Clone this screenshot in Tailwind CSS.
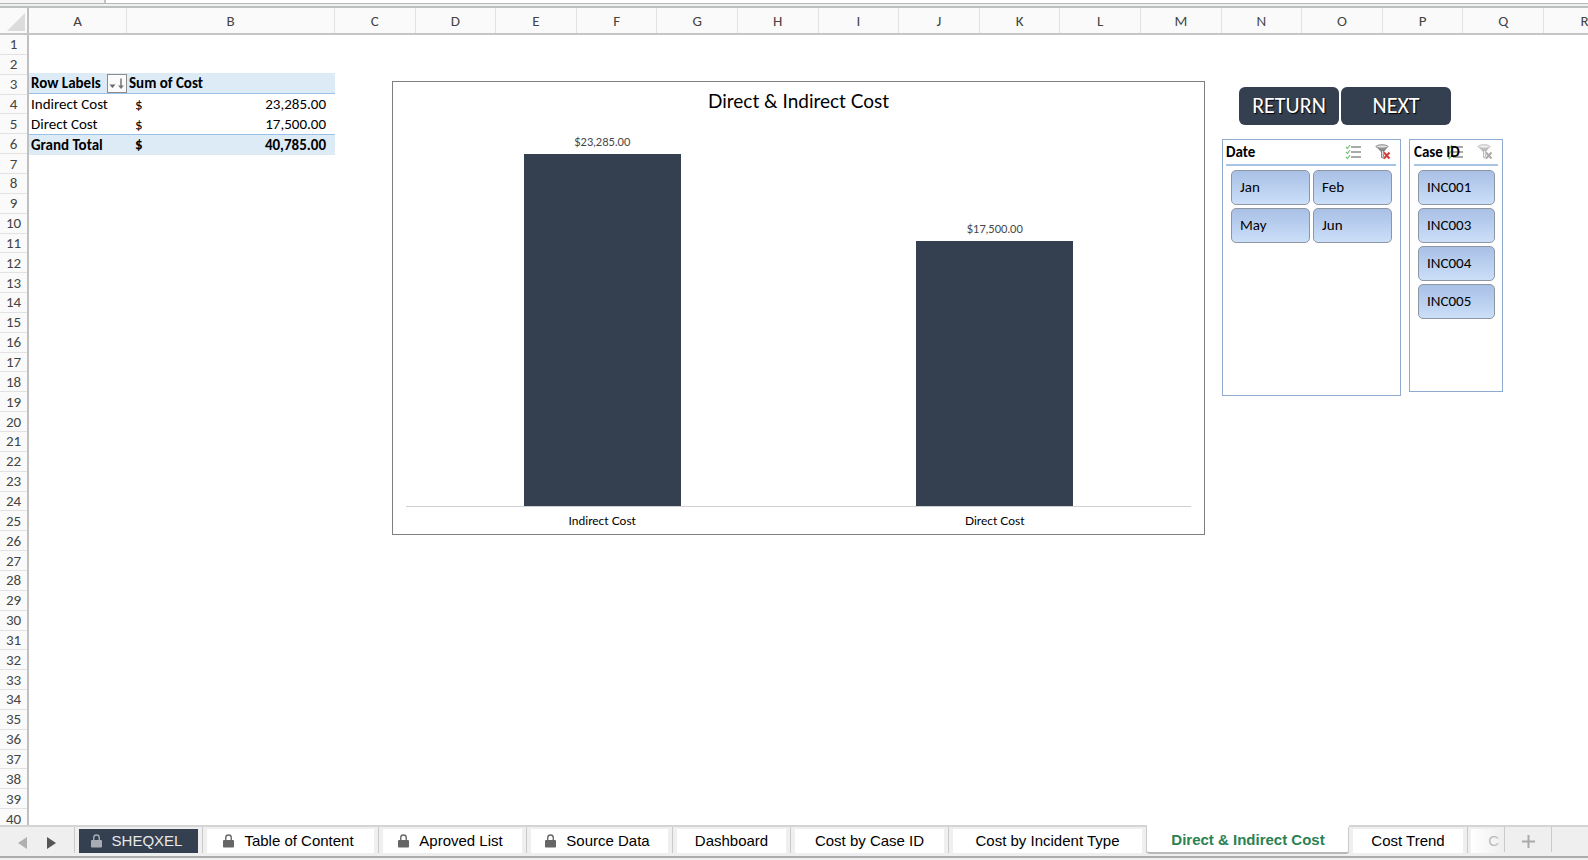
<!DOCTYPE html>
<html lang="en">
<head>
<meta charset="utf-8">
<title>Direct &amp; Indirect Cost</title>
<script src="https://cdn.jsdelivr.net/npm/@tailwindcss/browser@4"></script>
</head>
<body class="h-screen overflow-hidden flex flex-col bg-white text-black text-[15px] font-[Carlito,Lato,sans-serif]">

<!-- lower edge of the formula bar -->
<div class="h-2 shrink-0 flex flex-col">
  <div class="h-[3px] flex bg-white"><div class="w-[106px] border-r-2 border-[#c4c4c4] bg-[#f6f6f6]"></div></div>
  <div class="h-[5px] border-t border-b-2 border-t-[#b4b8b6] border-b-[#bcc0be] bg-[#f0f0f0]"></div>
</div>

<!-- column headings -->
<div id="columns" class="h-[27px] shrink-0 flex overflow-hidden border-b-2 border-[#c6c6c6] bg-[#fafafa] text-[#444] leading-[27px] text-center">
  <div class="w-[29px] shrink-0 border-r-2 border-[#c0c0c0]">
    <svg class="w-[27px] h-[25px]" viewBox="0 0 27 25" aria-hidden="true"><path d="M25 5v18H7z" fill="#dcdcdc"/></svg>
  </div>
  <div class="w-[98px] shrink-0 border-r border-[#e2e2e2]">A</div>
  <div class="w-[208px] shrink-0 border-r border-[#e2e2e2]">B</div>
  <div id="narrow" class="w-[1209px] shrink-0 grid grid-cols-[repeat(15,1fr)]"></div>
  <div class="w-[81px] shrink-0">R</div>
</div>

<main class="flex-1 min-h-0 flex overflow-hidden">
  <!-- row numbers; the last row runs on under the tab bar -->
  <div id="rows" class="w-[29px] h-[calc(100%+4px)] shrink-0 grid grid-rows-[repeat(40,1fr)] border-r-2 border-[#c0c0c0] bg-[#fafafa] text-[#444] text-center"></div>

  <div class="flex items-start">
    <table class="mt-[38px] w-[306px] shrink-0 table-fixed border-collapse leading-[19px]">
      <colgroup><col class="w-[98px]"><col></colgroup>
      <thead>
        <tr class="h-5 bg-[#ddebf7] border-b border-[#9bc2e6] text-left font-bold">
          <th scope="col" class="p-0 pl-[2px]">
            <span class="flex items-center justify-between whitespace-nowrap"><span class="pt-px">Row Labels</span>
              <button type="button" aria-label="Sort and filter row labels" class="w-5 h-[19px] shrink-0 border border-[#8c8c8c] bg-[#fbfbfb]">
                <svg class="w-[18px] h-[17px]" viewBox="0 0 18 17" aria-hidden="true"><path d="M1.500 9.500h6L4.500 13z" fill="#666"/><path d="M13 3.500v9" stroke="#777" stroke-width="1.500"/><path d="M10 10.500h6L13 14z" fill="#777"/></svg>
              </button></span>
          </th>
          <th scope="col" class="p-0 pt-px pl-[2px]">Sum of Cost</th>
        </tr>
      </thead>
      <tbody>
        <tr class="h-5"><th scope="row" class="p-0 pt-px pl-[2px] text-left font-normal">Indirect Cost</th><td class="p-0 pt-px pl-2 pr-[9px]"><span class="flex justify-between"><span>$</span><span>23,285.00</span></span></td></tr>
        <tr class="h-5 border-b border-[#9bc2e6]"><th scope="row" class="p-0 pt-px pl-[2px] text-left font-normal">Direct Cost</th><td class="p-0 pt-px pl-2 pr-[9px]"><span class="flex justify-between"><span>$</span><span>17,500.00</span></span></td></tr>
        <tr class="h-5 bg-[#ddebf7] font-bold"><th scope="row" class="p-0 pt-px pl-[2px] text-left">Grand Total</th><td class="p-0 pt-px pl-2 pr-[9px]"><span class="flex justify-between"><span>$</span><span>40,785.00</span></span></td></tr>
      </tbody>
    </table>

    <!-- bar chart -->
    <figure class="mt-[46px] ml-[57px] w-[813px] h-[454px] shrink-0 flex flex-col border border-[#7f7f7f] px-[13px] font-[Lato,sans-serif]">
      <figcaption class="pt-[7px] text-center text-[19px] leading-6">Direct &amp; Indirect Cost</figcaption>
      <div class="flex-1 grid grid-cols-2 border-b border-[#d0d0d0] text-[11px] text-[#444]">
        <div class="flex flex-col items-center justify-end"><span class="leading-6">$23,285.00</span><div class="w-2/5 bg-[#343f4f]" style="height:352px"></div></div>
        <div class="flex flex-col items-center justify-end"><span class="leading-6">$17,500.00</span><div class="w-2/5 bg-[#343f4f]" style="height:265px"></div></div>
      </div>
      <div class="h-[27px] grid grid-cols-2 text-center text-[12px] leading-7"><span>Indirect Cost</span><span>Direct Cost</span></div>
    </figure>

    <div class="mt-[52px] ml-[17px] shrink-0">
      <nav class="ml-[17px] flex gap-[2px] text-white text-[22px] text-center leading-[38px] [text-shadow:1px_1px_1px_#000]">
        <a href="#return" class="w-[100px] h-[38px] rounded-[6px] bg-[#343f4f]">RETURN</a>
        <a href="#next" class="w-[110px] h-[38px] rounded-[6px] bg-[#343f4f]">NEXT</a>
      </nav>
      <div class="mt-[14px] flex items-start gap-2">
        <section class="w-[179px] h-[257px] border border-[#8eaad0] pl-[3px] pr-1">
          <header class="h-[26px] flex items-center border-b-2 border-[#a9c3e2]">
            <h2 class="flex-1 font-bold">Date</h2>
            <button type="button" aria-label="Multi-select dates" class="mr-[14px]"><svg class="w-4 h-4 block" viewBox="0 0 16 16" fill="none" aria-hidden="true"><path d="M6 3h10M6 8h10M6 13h10" stroke="#555" stroke-width="1.200"/><path d="M1 3l1.500 1.500L5 1M1 8l1.500 1.500L5 6M1 13l1.500 1.500L5 11" stroke="#7cc47c" stroke-width="1.200"/></svg></button>
            <button type="button" aria-label="Clear date filter" class="mr-[5px]"><svg class="w-4 h-4 block" viewBox="0 0 16 16" aria-hidden="true"><path d="M1 2.500L6 8v5.500l3 1.500V8l4-5.500z" fill="#888"/><ellipse cx="7" cy="2.500" rx="6" ry="1.700" fill="#ddd" stroke="#888"/><path d="M7.500 7v6" stroke="#ddd"/><path d="M9 8.500l5.500 6M14.500 8.500L9 14.500" stroke="#fff" stroke-width="3"/><path d="M9 8.500l5.500 6M14.500 8.500L9 14.500" stroke="#d23c3c" stroke-width="2"/></svg></button>
          </header>
          <div id="dates" class="mt-1 ml-[5px] w-[161px] grid grid-cols-2 gap-[3px]"></div>
        </section>
        <section class="w-[94px] h-[253px] border border-[#8eaad0] px-1">
          <header class="relative h-[26px] flex items-center justify-end border-b-2 border-[#a9c3e2]">
            <h2 class="absolute left-0 font-bold whitespace-nowrap">Case ID</h2>
            <button type="button" aria-label="Multi-select cases" class="mr-[14px]"><svg class="w-4 h-4 block" viewBox="0 0 16 16" fill="none" aria-hidden="true"><path d="M6 3h10M6 8h10M6 13h10" stroke="#555" stroke-width="1.200"/><path d="M1 3l1.500 1.500L5 1M1 8l1.500 1.500L5 6M1 13l1.500 1.500L5 11" stroke="#7cc47c" stroke-width="1.200"/></svg></button>
            <button type="button" aria-label="Clear case filter" class="mr-[5px]"><svg class="w-4 h-4 block" viewBox="0 0 16 16" aria-hidden="true"><path d="M1 2.500L6 8v5.500l3 1.500V8l4-5.500z" fill="#bbb"/><ellipse cx="7" cy="2.500" rx="6" ry="1.700" fill="#eee" stroke="#bbb"/><path d="M7.500 7v6" stroke="#eee"/><path d="M9 8.500l5.500 6M14.500 8.500L9 14.500" stroke="#fff" stroke-width="3"/><path d="M9 8.500l5.500 6M14.500 8.500L9 14.500" stroke="#aaa" stroke-width="2"/></svg></button>
          </header>
          <div id="cases" class="mt-1 ml-1 w-[77px] grid gap-[3px]"></div>
        </section>
      </div>
    </div>
  </div>
</main>

<!-- sheet tabs -->
<nav aria-label="Sheets" class="relative z-10 h-[35px] shrink-0 flex flex-col bg-[#efefef] font-['Liberation_Sans',Arial,sans-serif] text-[15px]">
  <div class="h-[33px] flex border-b-2 border-[#acacac]">
    <div class="w-[75px] shrink-0 h-[27px] flex items-center justify-end gap-5 pr-[19px] pt-[6px] border-t-2 border-[#d4d4d4]">
      <button type="button" aria-label="Previous sheet"><svg class="w-[9px] h-3 block" viewBox="0 0 9 12"><path d="M9 0v12L0 6z" fill="#b0b0b0"/></svg></button>
      <button type="button" aria-label="Next sheet"><svg class="w-[9px] h-3 block" viewBox="0 0 9 12"><path d="M0 0v12l9-6z" fill="#555"/></svg></button>
    </div>
    <div id="tabs" class="flex shrink-0"></div>
    <div class="w-9 shrink-0 border-t-2 border-[#d4d4d4] pt-[2px]"><a href="#more" class="h-6 w-8 ml-[3px] block bg-linear-to-r from-white to-[#efefef] text-right pr-1 leading-6 text-[#bbb] overflow-hidden">C</a></div>
    <div class="flex-1 border-t-2 border-[#d4d4d4]">
      <button type="button" aria-label="Add sheet" class="w-12 h-[25px] flex items-center justify-center border-x border-[#cacaca] pt-1"><svg class="w-[13px] h-[13px]" viewBox="0 0 13 13"><path d="M6.500 0v13M0 6.500h13" stroke="#aaa" stroke-width="2"/></svg></button>
    </div>
  </div>
</nav>

<script>
const el = (id, html) => { document.getElementById(id).innerHTML = html; };

el('narrow', [...'CDEFGHIJKLMNOPQ'].map(c => `<div class="border-r border-[#e2e2e2]">${c}</div>`).join(''));

el('rows', Array.from({length: 40}, (_, i) => `<div class="flex items-center justify-center min-h-0 pt-px leading-none border-b border-[#e2e2e2]">${i + 1}</div>`).join(''));

const item = t => `<button type="button" aria-pressed="true" class="h-[35px] pl-2 text-left rounded-[5px] border border-[#8f96a3] bg-linear-to-b from-[#a9c0e6] to-[#cbdff8]">${t}</button>`;
el('dates', ['Jan', 'Feb', 'May', 'Jun'].map(item).join(''));
el('cases', ['INC001', 'INC003', 'INC004', 'INC005'].map(item).join(''));

const lock = '<svg class="w-[11px] h-[14px] shrink-0" viewBox="0 0 12 15" aria-hidden="true"><path d="M3 7V4a3 3 0 0 1 6 0v3" fill="none" stroke="currentColor" stroke-width="1.500"/><rect x="0" y="6.500" width="12" height="8" rx="1" fill="currentColor"/></svg>';
const tabs = [
  ['SHEQXEL', 128, true], ['Table of Content', 176, true], ['Aproved List', 148, true],
  ['Source Data', 146, true], ['Dashboard', 118], ['Cost by Case ID', 158],
  ['Cost by Incident Type', 198], ['Direct & Indirect Cost', 202], ['Cost Trend', 119]
];
el('tabs', tabs.map(([name, width, locked], i) => {
  const text = name.replace('&', '&amp;');
  if (i === 7) return `<a href="#sheet" aria-current="page" class="h-[29px] flex items-center justify-center bg-white border-b-2 border-[#b8b8b8] rounded-b-[3px] pt-1 text-[#2b8253] font-bold whitespace-nowrap" style="width:${width}px">${text}</a>`;
  const face = i === 0 ? 'bg-[#343f4f] text-[#e8e8e8]' : 'bg-white text-black';
  const tint = i === 0 ? 'text-[#a8adb5]' : 'text-[#666]';
  return `<div class="border-t-2 border-[#d4d4d4]" style="width:${width}px"><div class="h-[26px] pt-[2px] px-1 border-x border-[#cacaca] -ml-px"><a href="#sheet" class="h-6 flex items-center justify-center gap-[10px] whitespace-nowrap ${locked ? 'pr-1' : ''} ${face}">${locked ? `<span class="${tint}">${lock}</span>` : ''}${text}</a></div></div>`;
}).join(''));
</script>
</body>
</html>
